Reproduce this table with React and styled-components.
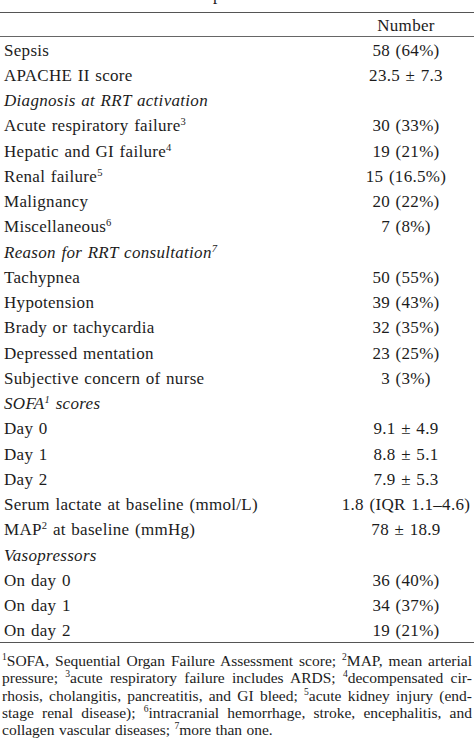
import React from "react";
import styled, { createGlobalStyle } from "styled-components";

const GlobalStyle = createGlobalStyle`
  html, body {
    margin: 0;
    padding: 0;
    background: #ffffff;
  }
  body {
    font-family: "Liberation Serif", "DejaVu Serif", serif;
    color: #1c1c1c;
  }
`;

const rows = [
  { label: "Sepsis", value: "58 (64%)" },
  { label: "APACHE II score", value: "23.5 ± 7.3" },
  { label: "Diagnosis at RRT activation", heading: true },
  { label: "Acute respiratory failure", sup: "3", value: "30 (33%)" },
  { label: "Hepatic and GI failure", sup: "4", value: "19 (21%)" },
  { label: "Renal failure", sup: "5", value: "15 (16.5%)" },
  { label: "Malignancy", value: "20 (22%)" },
  { label: "Miscellaneous", sup: "6", value: "7 (8%)" },
  { label: "Reason for RRT consultation", sup: "7", heading: true },
  { label: "Tachypnea", value: "50 (55%)" },
  { label: "Hypotension", value: "39 (43%)" },
  { label: "Brady or tachycardia", value: "32 (35%)" },
  { label: "Depressed mentation", value: "23 (25%)" },
  { label: "Subjective concern of nurse", value: "3 (3%)" },
  { label: "SOFA", sup: "1", tail: " scores", heading: true },
  { label: "Day 0", value: "9.1 ± 4.9" },
  { label: "Day 1", value: "8.8 ± 5.1" },
  { label: "Day 2", value: "7.9 ± 5.3" },
  { label: "Serum lactate at baseline (mmol/L)", value: "1.8 (IQR 1.1–4.6)" },
  { label: "MAP", sup: "2", tail: " at baseline (mmHg)", value: "78 ± 18.9" },
  { label: "Vasopressors", heading: true },
  { label: "On day 0", value: "36 (40%)" },
  { label: "On day 1", value: "34 (37%)" },
  { label: "On day 2", value: "19 (21%)" },
];

const App = () => {
  return (
    <>
      <GlobalStyle />
      <Page>
        <Caption>
          <CaptionText>Table 2: Baseline parameters of the cohort.</CaptionText>
        </Caption>
        <Table>
          <thead>
            <HeadRow>
              <LabelCell />
              <ValueCell>Number</ValueCell>
            </HeadRow>
          </thead>
          <tbody>
            {rows.map((r) => (
              <Row key={r.label}>
                <LabelCell $italic={r.heading}>
                  {r.label}
                  {r.sup && <Sup>{r.sup}</Sup>}
                  {r.tail}
                </LabelCell>
                <ValueCell>{r.value}</ValueCell>
              </Row>
            ))}
          </tbody>
        </Table>
        <Footnote>
          <Sup>1</Sup>SOFA, Sequential Organ Failure Assessment score; <Sup>2</Sup>MAP, mean arterial
          pressure; <Sup>3</Sup>acute respiratory failure includes ARDS; <Sup>4</Sup>decompensated cir­rhosis,
          cholangitis, pancreatitis, and GI bleed; <Sup>5</Sup>acute kidney injury (end-stage renal
          disease); <Sup>6</Sup>intracranial hemorrhage, stroke, encephalitis, and collagen vascular
          diseases; <Sup>7</Sup>more than one.
        </Footnote>
      </Page>
    </>
  );
};

const Page = styled.div`
  width: 474px;
  height: 747px;
  overflow: hidden;
`;

const Caption = styled.div`
  height: 12px;
  overflow: hidden;
  position: relative;
`;

const CaptionText = styled.div`
  position: absolute;
  left: 0;
  right: 0;
  top: -14px;
  text-align: center;
  font-size: 17px;
  line-height: 17px;
`;

const Table = styled.table`
  width: 100%;
  border-collapse: collapse;
  border-top: 1.5px solid #555;
  border-bottom: 1px solid #555;
  font-size: 17px;
  letter-spacing: 0.3px;
  word-spacing: 1px;
`;

const HeadRow = styled.tr`
  height: 24px;
  border-bottom: 1px solid #666;
`;

const Row = styled.tr`
  height: 25.25px;
`;

const LabelCell = styled.td`
  padding: 3px 0 0 4px;
  text-align: left;
  white-space: nowrap;
  font-style: ${(p) => (p.$italic ? "italic" : "normal")};
`;

const ValueCell = styled.td`
  width: 136px;
  padding: 3px 0 0 0;
  text-align: center;
  white-space: nowrap;
`;

const Sup = styled.sup`
  font-size: 0.62em;
  line-height: 0;
  vertical-align: 0.6em;
`;

const Footnote = styled.p`
  margin: 9px 2px 0 2px;
  font-size: 15.5px;
  line-height: 17.3px;
  text-align: justify;
  word-spacing: 0.5px;
`;

export default App;
